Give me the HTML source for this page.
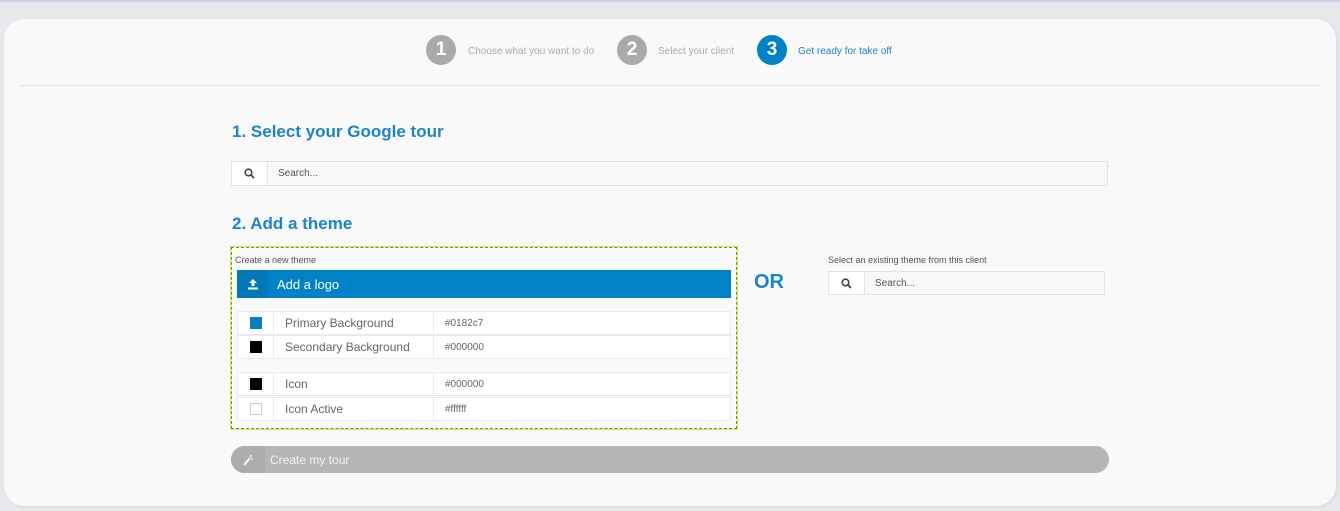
<!DOCTYPE html><html><head><style>
*{box-sizing:border-box;margin:0;padding:0}
body{width:1340px;height:511px;background:#e6e8ec;font-family:"Liberation Sans",sans-serif;position:relative;overflow:hidden}
.a{position:absolute}
.card{left:4px;top:19px;width:1332px;height:487px;background:#f9f9f9;border-radius:20px;box-shadow:1px 1px 2px #d6d8dc}
.circ{width:30px;height:30px;border-radius:50%;background:#aaa;color:#fff;font-size:19px;font-weight:bold;text-align:center;line-height:30px}
.st{font-size:10px;color:#aaa}
h2{position:absolute;font-size:17px;color:#1c84c8;font-weight:bold}
.srch{border:1px solid #dfe2e8;background:#f7f8fa;display:flex}
.srch .ic{width:36px;background:#fff;border-right:1px solid #dfe2e8;display:flex;align-items:center;justify-content:center}
.srch span{font-size:10px;color:#555;padding-left:10px;align-self:center}
.row{position:absolute;left:237px;width:494px;height:24px;background:#fff;border:1px solid #e8eaee;display:flex;font-size:12px;color:#666}
.row div{display:flex;align-items:center}
.row .c1{width:36px;justify-content:center;border-right:1px solid #e8eaee}
.row .c2{width:160px;padding-left:11px;border-right:1px solid #e8eaee}
.row .c3{padding-left:11px;font-size:10px}
.sw{width:12px;height:12px;border:1px solid #ccc}
</style></head><body>
<div class="a" style="left:0;top:0;width:1340px;height:2px;background:#c8d0e2"></div>
<div class="a card"></div>
<div class="a circ" style="left:426px;top:35px">1</div>
<div class="a st" style="left:468px;top:46px">Choose what you want to do</div>
<div class="a circ" style="left:617px;top:35px">2</div>
<div class="a st" style="left:658px;top:46px">Select your client</div>
<div class="a circ" style="left:757px;top:35px;background:#0182c7">3</div>
<div class="a st" style="left:798px;top:46px;color:#1c84c8">Get ready for take off</div>
<div class="a" style="left:20px;top:85px;width:1300px;height:1px;background:#e4e4e4"></div>
<h2 style="left:232px;top:122px">1. Select your Google tour</h2>
<div class="a srch" style="left:231px;top:161px;width:877px;height:25px"><div class="ic"><svg width="11" height="11" viewBox="0 0 11 11"><circle cx="4.5" cy="4.5" r="3.3" fill="none" stroke="#444" stroke-width="1.6"/><path d="M7 7l3 3" stroke="#444" stroke-width="1.8"/></svg></div><span>Search...</span></div>
<h2 style="left:232px;top:214px">2. Add a theme</h2>
<div class="a" style="left:231px;top:247px;width:506px;height:182px;border:1px dashed #3a8fd0;outline:1px solid #f2e600"></div>
<div class="a" style="left:235px;top:255px;font-size:9px;color:#555">Create a new theme</div>
<div class="a" style="left:237px;top:270px;width:494px;height:28px;background:#0182c7;color:#fff;font-size:13px;display:flex;align-items:center">
<div style="width:31px;height:28px;background:#0178b8;display:flex;align-items:center;justify-content:center"><svg width="12" height="12" viewBox="0 0 12 12"><path d="M6 1L2 5h2.5v3h3V5H10z" fill="#fff"/><rect x="1" y="9.5" width="10" height="2" fill="#fff"/></svg></div>
<span style="padding-left:9px">Add a logo</span></div>
<div class="row" style="top:311px"><div class="c1"><div class="sw" style="background:#0182c7;border-color:#0182c7"></div></div><div class="c2">Primary Background</div><div class="c3">#0182c7</div></div>
<div class="row" style="top:335px"><div class="c1"><div class="sw" style="background:#000;border-color:#000"></div></div><div class="c2">Secondary Background</div><div class="c3">#000000</div></div>
<div class="row" style="top:372px"><div class="c1"><div class="sw" style="background:#000;border-color:#000"></div></div><div class="c2">Icon</div><div class="c3">#000000</div></div>
<div class="row" style="top:397px"><div class="c1"><div class="sw" style="background:#fff"></div></div><div class="c2">Icon Active</div><div class="c3">#ffffff</div></div>
<div class="a" style="left:754px;top:271px;font-size:20px;font-weight:bold;color:#1c84c8">OR</div>
<div class="a" style="left:828px;top:255px;font-size:9px;color:#555">Select an existing theme from this client</div>
<div class="a srch" style="left:828px;top:271px;width:277px;height:24px"><div class="ic"><svg width="11" height="11" viewBox="0 0 11 11"><circle cx="4.5" cy="4.5" r="3.3" fill="none" stroke="#444" stroke-width="1.6"/><path d="M7 7l3 3" stroke="#444" stroke-width="1.8"/></svg></div><span>Search...</span></div>
<div class="a" style="left:231px;top:446px;width:878px;height:27px;border-radius:14px;background:#b5b5b5;display:flex;align-items:center;color:#f4f4f4;font-size:12px;overflow:hidden">
<div style="width:34px;height:27px;background:#adadad;display:flex;align-items:center;justify-content:center"><svg width="12" height="12" viewBox="0 0 12 12"><path d="M2 11L8 4" stroke="#fff" stroke-width="2"/><path d="M9 1v2M8 2h2M11 5h-2" stroke="#fff" stroke-width="1"/></svg></div>
<span style="padding-left:5px">Create my tour</span></div>
</body></html>
